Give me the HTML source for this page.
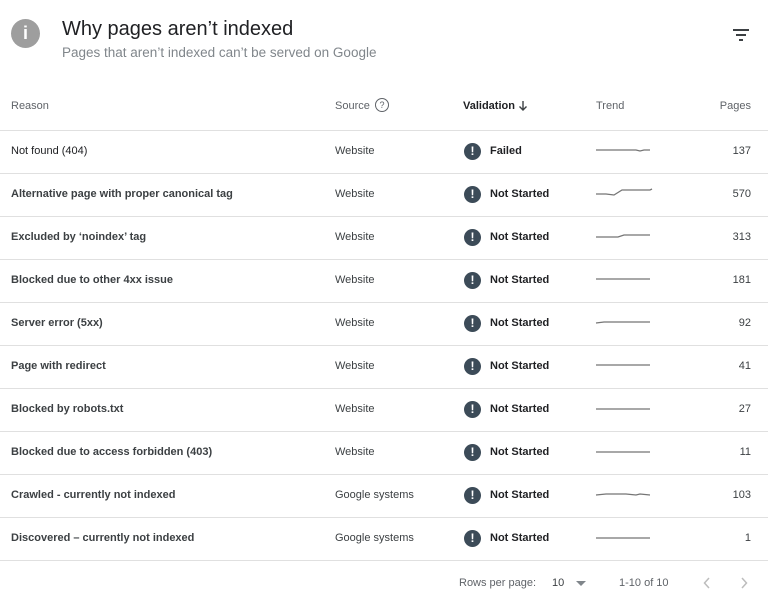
<!DOCTYPE html>
<html><head><style>
body{margin:0;width:768px;height:597px;background:#fff;font-family:"Liberation Sans",sans-serif;position:relative;overflow:hidden;color:#202124}
.a{position:absolute;white-space:nowrap}
.h{font-size:11px;color:#5f6368;top:100px}
.line{position:absolute;left:0;width:768px;height:1px;background:#e0e0e0}
.r{font-size:11px;font-weight:bold;color:#3c4043}
.s{font-size:11px;color:#3c4043}
.ic{position:absolute;width:17px;height:17px;border-radius:50%;background:#3c4b58;color:#fff;font-size:12px;font-weight:bold;text-align:center;line-height:17px}
.n{font-size:11px;color:#3c4043;text-align:right;right:17px}
</style></head><body>
<div class="a" style="left:11px;top:19px;width:29px;height:29px;border-radius:50%;background:#9e9e9e;color:#fff;font-weight:bold;font-size:18px;text-align:center;line-height:29px">i</div>
<div class="a" style="left:62px;top:18px;font-size:20px;color:#202124">Why pages aren’t indexed</div>
<div class="a" style="left:62px;top:45px;font-size:13.5px;color:#80868b">Pages that aren’t indexed can’t be served on Google</div>
<svg class="a" style="left:732px;top:28px" width="18" height="14"><path d="M1 2h16M4 7h10M7 12h4" stroke="#3c4043" stroke-width="2"/></svg>
<div class="a h" style="left:11px">Reason</div>
<div class="a h" style="left:335px">Source</div>
<div class="a" style="left:375px;top:98px;width:12px;height:12px;border:1.2px solid #5f6368;border-radius:50%;font-size:9px;text-align:center;line-height:12px;color:#5f6368">?</div>
<div class="a h" style="left:463px;color:#202124;font-weight:bold">Validation</div>
<svg class="a" style="left:518px;top:100px" width="10" height="12"><path d="M5 1v9M1.5 6.5L5 10l3.5-3.5" stroke="#3c4043" stroke-width="1.4" fill="none"/></svg>
<div class="a h" style="left:596px">Trend</div>
<div class="a h" style="right:17px">Pages</div>
<div class="line" style="top:130px"></div>
<div id="rows"></div>
<script>
var d=[["Not found (404)","Website","Failed","M0 3H40L44 4L48 3H54",137],
["Alternative page with proper canonical tag","Website","Not Started","M0 4H10L18 5L26 0H54L56 -1",570],
["Excluded by ‘noindex’ tag","Website","Not Started","M0 4H22L28 2H54",313],
["Blocked due to other 4xx issue","Website","Not Started","M0 3H54",181],
["Server error (5xx)","Website","Not Started","M0 4L8 3H54",92],
["Page with redirect","Website","Not Started","M0 3H54",41],
["Blocked by robots.txt","Website","Not Started","M0 4H54",27],
["Blocked due to access forbidden (403)","Website","Not Started","M0 4H54",11],
["Crawled - currently not indexed","Google systems","Not Started","M0 4L10 3H30L40 4L44 3L54 4",103],
["Discovered – currently not indexed","Google systems","Not Started","M0 4H54",1]];
var h="";d.forEach(function(r,i){var c=151+43*i;
h+='<div class="a r" style="left:11px;top:'+(c-6)+'px;'+(i==0?'font-weight:normal;color:#202124':'')+'">'+r[0]+'</div>';
h+='<div class="a s" style="left:335px;top:'+(c-6)+'px">'+r[1]+'</div>';
h+='<div class="ic" style="left:464px;top:'+(c-8)+'px">!</div>';
h+='<div class="a r" style="left:490px;top:'+(c-6)+'px;color:#202124">'+r[2]+'</div>';
h+='<svg class="a" style="left:596px;top:'+(c-4)+'px;overflow:visible" width="56" height="8"><path d="'+r[3]+'" stroke="#757575" stroke-width="1.3" fill="none"/></svg>';
h+='<div class="a n" style="top:'+(c-6)+'px">'+r[4]+'</div>';
h+='<div class="line" style="top:'+(c+22)+'px"></div>';});
document.getElementById("rows").innerHTML=h;
</script>
<div class="a" style="left:459px;top:577px;font-size:11px;color:#5f6368">Rows per page:</div>
<div class="a" style="left:552px;top:577px;font-size:11px;color:#3c4043">10</div>
<svg class="a" style="left:576px;top:581px" width="10" height="6"><path d="M0 0h10L5 5z" fill="#80868b"/></svg>
<div class="a" style="left:619px;top:577px;font-size:11px;color:#5f6368">1-10 of 10</div>
<svg class="a" style="left:703px;top:577px" width="8" height="12"><path d="M6 1L1.5 6L6 11" stroke="#bdbdbd" stroke-width="1.5" fill="none"/></svg>
<svg class="a" style="left:740px;top:577px" width="8" height="12"><path d="M2 1L6.5 6L2 11" stroke="#bdbdbd" stroke-width="1.5" fill="none"/></svg>
</body></html>
